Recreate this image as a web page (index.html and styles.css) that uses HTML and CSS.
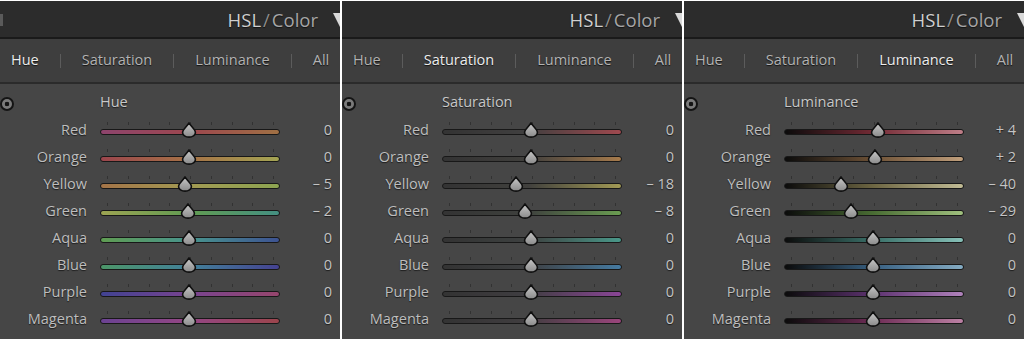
FILE: index.html
```html
<!DOCTYPE html>
<html>
<head>
<meta charset="utf-8">
<link rel="stylesheet" href="styles.css">
</head>
<body>
<svg class="defs" width="0" height="0">
  <defs>
    <linearGradient id="tg" x1="0" y1="0" x2="0" y2="1">
      <stop offset="0" stop-color="#dadada"/>
      <stop offset="1" stop-color="#969696"/>
    </linearGradient>
    <symbol id="thumb" viewBox="0 0 15 15">
      <path d="M7.5 0.9 C9.2 4.1 13.5 6.8 13.5 10 A6 4.2 0 0 1 1.5 10 C1.5 6.8 5.8 4.1 7.5 0.9 Z" fill="url(#tg)" stroke="#111" stroke-width="1.5" stroke-linejoin="round"/>
    </symbol>
  </defs>
</svg>
<div class="strip">

  <section class="panel">
    <header class="head"><span class="frag"></span><span class="title"><b>HSL</b><i>/</i><em>Color</em></span><span class="tri"></span></header>
    <nav class="tabs"><span class="tab on">Hue</span><span class="sep"></span><span class="tab">Saturation</span><span class="sep"></span><span class="tab">Luminance</span><span class="sep"></span><span class="tab">All</span></nav>
    <div class="body">
      <div class="sub"><span class="target"></span><span class="subtitle">Hue</span></div>
      <div class="rows">
        <div class="row"><span class="label">Red</span><div class="track h-red"><svg class="thumb" style="left:49.5%"><use href="#thumb"/></svg></div><span class="value">0</span></div>
        <div class="row"><span class="label">Orange</span><div class="track h-orange"><svg class="thumb" style="left:49.5%"><use href="#thumb"/></svg></div><span class="value">0</span></div>
        <div class="row"><span class="label">Yellow</span><div class="track h-yellow"><svg class="thumb" style="left:47.3%"><use href="#thumb"/></svg></div><span class="value">– 5</span></div>
        <div class="row"><span class="label">Green</span><div class="track h-green"><svg class="thumb" style="left:48.6%"><use href="#thumb"/></svg></div><span class="value">– 2</span></div>
        <div class="row"><span class="label">Aqua</span><div class="track h-aqua"><svg class="thumb" style="left:49.5%"><use href="#thumb"/></svg></div><span class="value">0</span></div>
        <div class="row"><span class="label">Blue</span><div class="track h-blue"><svg class="thumb" style="left:49.5%"><use href="#thumb"/></svg></div><span class="value">0</span></div>
        <div class="row"><span class="label">Purple</span><div class="track h-purple"><svg class="thumb" style="left:49.5%"><use href="#thumb"/></svg></div><span class="value">0</span></div>
        <div class="row"><span class="label">Magenta</span><div class="track h-magenta"><svg class="thumb" style="left:49.5%"><use href="#thumb"/></svg></div><span class="value">0</span></div>
      </div>
    </div>
  </section>

  <section class="panel">
    <header class="head"><span class="frag none"></span><span class="title"><b>HSL</b><i>/</i><em>Color</em></span><span class="tri"></span></header>
    <nav class="tabs"><span class="tab">Hue</span><span class="sep"></span><span class="tab on">Saturation</span><span class="sep"></span><span class="tab">Luminance</span><span class="sep"></span><span class="tab">All</span></nav>
    <div class="body">
      <div class="sub"><span class="target"></span><span class="subtitle">Saturation</span></div>
      <div class="rows">
        <div class="row"><span class="label">Red</span><div class="track s-red"><svg class="thumb" style="left:49.5%"><use href="#thumb"/></svg></div><span class="value">0</span></div>
        <div class="row"><span class="label">Orange</span><div class="track s-orange"><svg class="thumb" style="left:49.5%"><use href="#thumb"/></svg></div><span class="value">0</span></div>
        <div class="row"><span class="label">Yellow</span><div class="track s-yellow"><svg class="thumb" style="left:41%"><use href="#thumb"/></svg></div><span class="value">– 18</span></div>
        <div class="row"><span class="label">Green</span><div class="track s-green"><svg class="thumb" style="left:45.8%"><use href="#thumb"/></svg></div><span class="value">– 8</span></div>
        <div class="row"><span class="label">Aqua</span><div class="track s-aqua"><svg class="thumb" style="left:49.5%"><use href="#thumb"/></svg></div><span class="value">0</span></div>
        <div class="row"><span class="label">Blue</span><div class="track s-blue"><svg class="thumb" style="left:49.5%"><use href="#thumb"/></svg></div><span class="value">0</span></div>
        <div class="row"><span class="label">Purple</span><div class="track s-purple"><svg class="thumb" style="left:49.5%"><use href="#thumb"/></svg></div><span class="value">0</span></div>
        <div class="row"><span class="label">Magenta</span><div class="track s-magenta"><svg class="thumb" style="left:49.5%"><use href="#thumb"/></svg></div><span class="value">0</span></div>
      </div>
    </div>
  </section>

  <section class="panel">
    <header class="head"><span class="frag none"></span><span class="title"><b>HSL</b><i>/</i><em>Color</em></span><span class="tri"></span></header>
    <nav class="tabs"><span class="tab">Hue</span><span class="sep"></span><span class="tab">Saturation</span><span class="sep"></span><span class="tab on">Luminance</span><span class="sep"></span><span class="tab">All</span></nav>
    <div class="body">
      <div class="sub"><span class="target"></span><span class="subtitle">Luminance</span></div>
      <div class="rows">
        <div class="row"><span class="label">Red</span><div class="track l-red"><svg class="thumb" style="left:52.2%"><use href="#thumb"/></svg></div><span class="value">+ 4</span></div>
        <div class="row"><span class="label">Orange</span><div class="track l-orange"><svg class="thumb" style="left:50.8%"><use href="#thumb"/></svg></div><span class="value">+ 2</span></div>
        <div class="row"><span class="label">Yellow</span><div class="track l-yellow"><svg class="thumb" style="left:31.5%"><use href="#thumb"/></svg></div><span class="value">– 40</span></div>
        <div class="row"><span class="label">Green</span><div class="track l-green"><svg class="thumb" style="left:37%"><use href="#thumb"/></svg></div><span class="value">– 29</span></div>
        <div class="row"><span class="label">Aqua</span><div class="track l-aqua"><svg class="thumb" style="left:49.5%"><use href="#thumb"/></svg></div><span class="value">0</span></div>
        <div class="row"><span class="label">Blue</span><div class="track l-blue"><svg class="thumb" style="left:49.5%"><use href="#thumb"/></svg></div><span class="value">0</span></div>
        <div class="row"><span class="label">Purple</span><div class="track l-purple"><svg class="thumb" style="left:49.5%"><use href="#thumb"/></svg></div><span class="value">0</span></div>
        <div class="row"><span class="label">Magenta</span><div class="track l-magenta"><svg class="thumb" style="left:49.5%"><use href="#thumb"/></svg></div><span class="value">0</span></div>
      </div>
    </div>
  </section>

</div>
</body>
</html>
```

FILE: styles.css
```css
* { box-sizing: border-box; }
html, body { margin: 0; padding: 0; background: #ffffff; }
body {
  width: 1024px;
  height: 341px;
  overflow: hidden;
  font-family: "Open Sans", "Noto Sans", sans-serif;
}
.defs { position: absolute; width: 0; height: 0; }

.strip {
  display: flex;
  gap: 2px;
  padding: 1px 0 2px;
  height: 341px;
}
.panel {
  width: 340px;
  flex: 0 0 340px;
  display: flex;
  flex-direction: column;
  overflow: hidden;
  background: #464646;
}

/* header */
.head {
  height: 38px;
  flex: 0 0 38px;
  background: #2c2c2c;
  border-bottom: 2px solid #1a1a1a;
  display: flex;
  align-items: center;
  justify-content: space-between;
}
.frag { width: 3px; height: 12px; background: #5a5a5a; align-self: center; margin-top: 2px; }
.frag.none { background: transparent; }
.title {
  margin-left: auto;
  margin-right: 15px;
  font-size: 18.5px;
  line-height: 1;
  margin-top: 2px;
  text-shadow: 0 1px 1px rgba(0,0,0,0.6);
}
.title b { font-weight: 400; color: #cfcfcf; }
.title i { font-style: normal; color: #8e8e8e; margin: 0 2px; }
.title em { font-style: normal; color: #a6a6a6; }
.tri {
  width: 0; height: 0;
  border-left: 7px solid transparent;
  border-right: 7px solid transparent;
  border-top: 14px solid #d9d9d9;
  margin-right: -7px;
  margin-top: 2px;
  flex: 0 0 auto;
}

/* tabs */
.tabs {
  height: 45px;
  flex: 0 0 45px;
  background: #3e3e3e;
  border-bottom: 2px solid #2b2b2b;
  display: flex;
  align-items: center;
  gap: 21px;
  padding-left: 11px;
  padding-bottom: 2px;
  white-space: nowrap;
}
.tab {
  font-size: 14.5px;
  color: #b3b3b3;
  text-shadow: 0 1px 1px rgba(0,0,0,0.7);
}
.tab.on { color: #ededed; }
.sep { width: 1px; height: 14px; background: #5c5c5c; flex: 0 0 1px; margin-top: 2px; }

/* body */
.body { flex: 1; display: flex; flex-direction: column; }
.sub {
  height: 18px;
  margin-top: 8px;
  display: flex;
  align-items: center;
  position: relative;
}
.target {
  width: 14px; height: 14px;
  flex: 0 0 14px;
  border-radius: 50%;
  border: 2px solid #141414;
  background: radial-gradient(circle, #141414 0 2px, #7a7a7a 2.6px);
  margin-left: 0;
  margin-top: 6px;
}
.subtitle {
  margin-left: 86px;
  font-size: 14.5px;
  color: #c8c8c8;
  text-shadow: 0 1px 1px rgba(0,0,0,0.6);
}
.rows { margin-top: 6px; display: flex; flex-direction: column; }
.row {
  height: 27px;
  display: flex;
  align-items: center;
}
.label {
  width: 88px;
  text-align: right;
  padding-right: 1px;
  font-size: 14.5px;
  color: #bebebe;
  text-shadow: 0 1px 1px rgba(0,0,0,0.6);
}
.value {
  flex: 1;
  text-align: right;
  padding-right: 8px;
  font-size: 14.5px;
  color: #c4c4c4;
  text-shadow: 0 1px 1px rgba(0,0,0,0.6);
  white-space: nowrap;
}
.track {
  position: relative;
  width: 180px;
  height: 6px;
  margin-left: 12px;
  margin-top: 4px;
  border: 1px solid #1a1a1a;
  border-radius: 3px;
  filter: saturate(0.8) brightness(0.92);
}
.track::before {
  content: "";
  position: absolute;
  left: 6px;
  top: -8px;
  width: 168px;
  height: 3px;
  background: repeating-linear-gradient(90deg, #363636 0 1px, transparent 1px 20.75px);
}
.thumb {
  position: absolute;
  width: 16px;
  height: 16px;
  top: -8px;
  margin-left: -8px;
  overflow: visible;
}

/* hue tracks */
.h-red { background: linear-gradient(90deg, #a8457c, #bd4852 50%, #b9783c); }
.h-orange { background: linear-gradient(90deg, #bb4650, #c07a3e 50%, #b3b446); }
.h-yellow { background: linear-gradient(90deg, #bd7c40, #b3a947 50%, #95b544); }
.h-green { background: linear-gradient(90deg, #aab445, #5fae4a 50%, #3aa08e); }
.h-aqua { background: linear-gradient(90deg, #5cae4a, #3ea69c 50%, #3d5ab0); }
.h-blue { background: linear-gradient(90deg, #44a86a, #3a8fb0 50%, #4a46b2); }
.h-purple { background: linear-gradient(90deg, #4547b2, #8c45ac 50%, #b4477c); }
.h-magenta { background: linear-gradient(90deg, #7b44b0, #b0479a 50%, #bc4650); }

/* saturation tracks */
.s-red { background: linear-gradient(90deg, #383838, #474545 48%, #c04a52); }
.s-orange { background: linear-gradient(90deg, #383838, #474542 48%, #bf8444); }
.s-yellow { background: linear-gradient(90deg, #383838, #474642 48%, #b3a84a); }
.s-green { background: linear-gradient(90deg, #383838, #444743 48%, #6aaf48); }
.s-aqua { background: linear-gradient(90deg, #383838, #434746 48%, #3faa96); }
.s-blue { background: linear-gradient(90deg, #383838, #434548 48%, #3f88bd); }
.s-purple { background: linear-gradient(90deg, #383838, #464348 48%, #a346b4); }
.s-magenta { background: linear-gradient(90deg, #383838, #474346 48%, #b94590); }

/* luminance tracks */
.l-red { background: linear-gradient(90deg, #0c0c0c, #8d2a38 50%, #dc8592); }
.l-orange { background: linear-gradient(90deg, #0c0c0c, #7e5833 50%, #d8ab7c); }
.l-yellow { background: linear-gradient(90deg, #0c0c0c, #7a7040 50%, #d4cc98); }
.l-green { background: linear-gradient(90deg, #0c0c0c, #4a7a2c 50%, #a8d47a); }
.l-aqua { background: linear-gradient(90deg, #0c0c0c, #357e74 50%, #86d4c8); }
.l-blue { background: linear-gradient(90deg, #0c0c0c, #336a98 50%, #88bcdc); }
.l-purple { background: linear-gradient(90deg, #0c0c0c, #6e3488 50%, #c88ad8); }
.l-magenta { background: linear-gradient(90deg, #0c0c0c, #852c64 50%, #d888b8); }
```
